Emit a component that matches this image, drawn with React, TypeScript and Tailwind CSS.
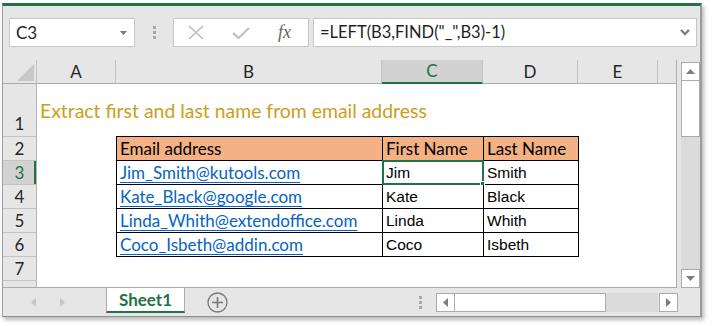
import React from "react";

const cal = "font-['Lato','Open_Sans',sans-serif]";
const arial = "font-['Liberation_Sans',Arial,sans-serif]";

const emails = [
  ["Jim_Smith@kutools.com", "Jim", "Smith"],
  ["Kate_Black@google.com", "Kate", "Black"],
  ["Linda_Whith@extendoffice.com", "Linda", "Whith"],
  ["Coco_Isbeth@addin.com", "Coco", "Isbeth"],
];

function Tri({ dir, color, className }: { dir: "up" | "down" | "left" | "right"; color: string; className?: string }) {
  const pts = {
    up: "0,5 4.5,0 9,5",
    down: "0,0 9,0 4.5,5",
    left: "5,0 5,9 0,4.5",
    right: "0,0 5,4.5 0,9",
  }[dir];
  const vertical = dir === "up" || dir === "down";
  return (
    <svg width={vertical ? 9 : 5} height={vertical ? 5 : 9} className={className}>
      <polygon points={pts} fill={color} />
    </svg>
  );
}

function Dots() {
  return (
    <div className="flex flex-col gap-[2px]">
      <div className="w-[3px] h-[3px] bg-[#a8a8a8]" />
      <div className="w-[3px] h-[3px] bg-[#a8a8a8]" />
      <div className="w-[3px] h-[3px] bg-[#a8a8a8]" />
    </div>
  );
}

function FormulaBar() {
  return (
    <div className="h-[54px] flex items-start pt-[12px] pl-[6px]">
      <div className="w-[126px] h-[29px] bg-white border border-[#c6c6c6] flex items-center justify-between pl-[6px] pr-[7px]">
        <span className={`${cal} text-[17px] text-[#262626]`}>C3</span>
        <svg width="7" height="4">
          <polygon points="0,0 7,0 3.5,4" fill="#7a7a7a" />
        </svg>
      </div>
      <div className="w-[38px] h-[29px] flex items-center justify-center">
        <Dots />
      </div>
      <div className="w-[136px] h-[29px] bg-white border border-[#c6c6c6] flex items-center">
        <svg width="16" height="15" className="ml-[14px]">
          <path d="M1 1 L15 14 M15 1 L1 14" stroke="#bdbdbd" strokeWidth="1.6" fill="none" />
        </svg>
        <svg width="18" height="12" className="ml-[28px]">
          <path d="M1 6 L6.5 11 L17 1" stroke="#c4c4c4" strokeWidth="2.4" fill="none" />
        </svg>
        <span className="ml-[28px] font-['Liberation_Serif',serif] italic text-[18px] text-[#666]">fx</span>
      </div>
      <div className="ml-[4px] w-[384px] h-[29px] bg-white border border-[#c6c6c6] flex items-center justify-between pl-[6px] pr-[6px]">
        <span className={`${cal} text-[16.5px] text-[#1f1f1f]`}>=LEFT(B3,FIND("_",B3)-1)</span>
        <svg width="10" height="7">
          <path d="M1 1 L5 5 L9 1" stroke="#7f7f7f" strokeWidth="2.4" fill="none" />
        </svg>
      </div>
    </div>
  );
}

function ColumnHeaders() {
  const hdr = `${cal} text-[17px] flex items-center justify-center border-b border-r border-b-[#ababab] border-r-[#c3c3c3]`;
  return (
    <div className="flex h-[24px] bg-[#e6e6e6]">
      <div className="w-[34px] border-b border-r border-b-[#ababab] border-r-[#c3c3c3] flex items-end justify-end pr-[2px] pb-[2px]">
        <svg width="17" height="17">
          <polygon points="17,0 17,17 0,17" fill="#c8c8c8" />
        </svg>
      </div>
      <div className={`w-[79px] ${hdr} text-[#262626]`}>A</div>
      <div className={`w-[266px] ${hdr} text-[#262626]`}>B</div>
      <div className={`${cal} w-[101px] text-[17px] flex items-center justify-center bg-[#d2d2d2] border-r border-r-[#c3c3c3] border-b-2 border-b-[#217346] text-[#217346]`}>
        C
      </div>
      <div className={`w-[95px] ${hdr} text-[#262626]`}>D</div>
      <div className={`w-[80px] ${hdr} text-[#262626]`}>E</div>
      <div className="flex-1 border-b border-b-[#ababab]" />
    </div>
  );
}

function RowHeaders() {
  const cell = `${cal} text-[17px] text-[#262626] h-[24px] border-b border-[#c3c3c3] flex items-center justify-center`;
  return (
    <div className="w-[34px] shrink-0 bg-[#e6e6e6] border-r border-[#b5b5b5] flex flex-col">
      <div className="h-[53px] border-b border-[#c3c3c3] flex items-end">
        <div className={`${cal} text-[17px] text-[#262626] h-[24px] w-full flex items-center justify-center`}>1</div>
      </div>
      <div className={cell}>2</div>
      <div className={`${cal} text-[17px] text-[#217346] h-[24px] border-b border-[#c3c3c3] flex items-center justify-center bg-[#d2d2d2] shadow-[inset_-2px_0_0_#217346]`}>
        3
      </div>
      <div className={cell}>4</div>
      <div className={cell}>5</div>
      <div className={cell}>6</div>
      <div className={cell}>7</div>
      <div className="flex-1" />
    </div>
  );
}

function DataTable() {
  const c = "h-[24px] border-r border-b border-black flex items-center pl-[3px] whitespace-nowrap";
  return (
    <div className="ml-[79px] w-fit border-l border-t border-black">
      <div className="flex bg-[#f4b183]">
        <div className={`${c} ${cal} w-[266px] text-[17px] text-black`}>Email address</div>
        <div className={`${c} ${cal} w-[101px] text-[17px] text-black`}>First Name</div>
        <div className={`${c} ${cal} w-[95px] text-[17px] text-black`}>Last Name</div>
      </div>
      {emails.map(([mail, first, last], i) => (
        <div key={mail} className="flex bg-white">
          <div className={`${c} ${cal} w-[266px] text-[17px] text-[#0563c1] underline underline-offset-[3px]`}>{mail}</div>
          <div className={`${c} ${arial} w-[101px] text-[15.5px] text-black relative`}>
            {first}
            {i === 0 && (
              <div className="absolute -left-px -top-px w-[102px] h-[25px] border-2 border-[#217346]">
                <div className="absolute -right-[3px] -bottom-[3px] w-[5px] h-[5px] bg-[#217346] border border-white" />
              </div>
            )}
          </div>
          <div className={`${c} ${arial} w-[95px] text-[15.5px] text-black`}>{last}</div>
        </div>
      ))}
    </div>
  );
}

function Sheet() {
  return (
    <div className="w-[675px] flex flex-col border-r border-b border-[#ababab]">
      <ColumnHeaders />
      <div className="flex flex-1 bg-white">
        <RowHeaders />
        <div className="flex-1 flex flex-col">
          <div className="h-[52px] flex items-center pl-[3px] pt-[2px]">
            <span className={`${cal} text-[19.4px] text-[#c9a01c] whitespace-nowrap`}>
              Extract first and last name from email address
            </span>
          </div>
          <DataTable />
        </div>
      </div>
    </div>
  );
}

function VScroll() {
  return (
    <div className="ml-[4px] w-[19px] pt-[2px] flex flex-col">
      <div className="h-[19px] bg-white border border-[#ababab] flex items-center justify-center">
        <Tri dir="up" color="#7d7d7d" />
      </div>
      <div className="flex-1 bg-[#dbdbdb] flex flex-col">
        <div className="h-[56px] bg-white border border-[#ababab] border-t-0" />
      </div>
      <div className="h-[19px] bg-white border border-[#ababab] flex items-center justify-center">
        <Tri dir="down" color="#7d7d7d" />
      </div>
    </div>
  );
}

function TabBar() {
  return (
    <div className="h-[28px] flex items-start">
      <div className="w-[103px] h-[28px] flex items-center pl-[28px] gap-[24px]">
        <Tri dir="left" color="#c6c6c6" />
        <Tri dir="right" color="#c6c6c6" />
      </div>
      <div className="w-[79px] h-[25px] bg-white border-l border-r border-[#ababab] border-b-2 border-b-[#217346] flex items-center justify-center">
        <span className={`${cal} font-bold text-[17px] text-[#217346]`}>Sheet1</span>
      </div>
      <div className="w-[64px] h-[28px] flex items-center justify-center">
        <svg width="21" height="21" viewBox="0 0 21 21">
          <circle cx="10.5" cy="10.5" r="9.5" fill="none" stroke="#7a7a7a" strokeWidth="1.3" />
          <path d="M10.5 5 V16 M5 10.5 H16" stroke="#7a7a7a" strokeWidth="1.6" />
        </svg>
      </div>
      <div className="w-[187px] h-[28px] flex items-center justify-end pr-[14px]">
        <Dots />
      </div>
      <div className="h-[28px] flex items-center">
        <div className="w-[19px] h-[19px] bg-white border border-[#ababab] flex items-center justify-center">
          <Tri dir="left" color="#7d7d7d" />
        </div>
        <div className="w-[151px] h-[19px] bg-white border border-[#ababab] border-l-0" />
        <div className="w-[52px] h-[19px] bg-[#dbdbdb]" />
        <div className="ml-[1px] w-[19px] h-[19px] bg-white border border-[#ababab] flex items-center justify-center">
          <Tri dir="right" color="#7d7d7d" />
        </div>
      </div>
    </div>
  );
}

export default function App() {
  return (
    <div className="w-[712px] h-[326px] bg-white pl-[2px] pt-[3px]">
      <div className="w-[700px] h-[314px] bg-[#e6e6e6] border-t-[3px] border-t-[#217346] border-l border-l-[#a0a0a0] border-r-2 border-r-[#9c9c9c] border-b border-b-[#8f8f8f] shadow-[2px_3px_4px_rgba(0,0,0,0.28)] flex flex-col">
        <FormulaBar />
        <div className="flex h-[228px]">
          <Sheet />
          <VScroll />
        </div>
        <TabBar />
      </div>
    </div>
  );
}
